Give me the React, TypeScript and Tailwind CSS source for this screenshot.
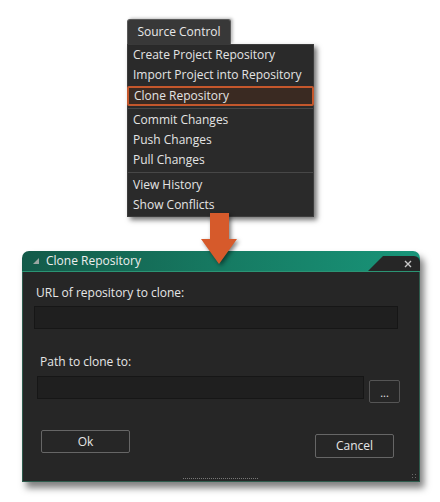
const menuTop = ["Create Project Repository", "Import Project into Repository"]
const menuMid = ["Commit Changes", "Push Changes", "Pull Changes"]
const menuEnd = ["View History", "Show Conflicts"]

function MenuItem({ label }: { label: string }) {
  return <div className="h-[20px] px-[5px] leading-[20px] text-[12px] text-[#e4e4e4]">{label}</div>
}

export default function App() {
  return (
    <div className="relative w-[440px] h-[502px] bg-white overflow-hidden font-['Open_Sans',sans-serif]">
      {/* menu */}
      <div className="pl-[127px] pt-[19px]">
        <div className="relative z-10 w-[104px] h-[25px] bg-[#383838] border border-[#5a5a5a] border-b-0 rounded-t-[3px] text-center leading-[24px] text-[12px] text-[#e8e8e8] shadow-[2px_-1px_3px_rgba(0,0,0,0.25)]">
          Source Control
        </div>
        <div className="w-[187px] bg-[#2a2a2a] border border-[#3c3c3c] pb-[1px] shadow-[3px_3px_5px_rgba(0,0,0,0.55)]">
          {menuTop.map((m) => (
            <MenuItem key={m} label={m} />
          ))}
          <div className="-mx-[1px] mt-[1px] h-[20px] px-[5px] leading-[16px] text-[12px] text-[#e4e4e4] bg-[#3a2a22] border-2 border-[#c4572c] rounded-[2px]">
            Clone Repository
          </div>
          <div className="h-[4px] flex items-center">
            <div className="w-full h-[1px] bg-[#474747]" />
          </div>
          {menuMid.map((m) => (
            <MenuItem key={m} label={m} />
          ))}
          <div className="h-[5px] flex items-center">
            <div className="w-full h-[1px] bg-[#474747]" />
          </div>
          {menuEnd.map((m) => (
            <MenuItem key={m} label={m} />
          ))}
        </div>
      </div>

      {/* dialog */}
      <div className="ml-[22px] mt-[34px] w-[398px] rounded-t-[7px] shadow-[4px_6px_7px_rgba(0,0,0,0.5)]">
        <div className="flex h-[21px] rounded-t-[7px] bg-gradient-to-r from-[#135a49] via-[#167a62] to-[#189579] border-b border-[#2b9474]">
          <div className="flex items-center pl-[11px] gap-[7px]">
            <svg width="6" height="6" viewBox="0 0 6 6">
              <polygon points="6,0 6,6 0,6" fill="#9aa6a2" />
            </svg>
            <span className="text-[12px] text-[#eeeeee] leading-none">Clone Repository</span>
          </div>
          <div className="ml-auto self-end w-[52px] h-[15px] bg-[#262626] rounded-tr-[6px] [clip-path:polygon(15px_0,100%_0,100%_100%,0_100%)] flex items-center justify-end pr-[8px]">
            <svg width="8" height="8" viewBox="0 0 8 8">
              <path d="M1 1L7 7M7 1L1 7" stroke="#c8c8c8" strokeWidth="1.4" />
            </svg>
          </div>
        </div>
        <div className="relative h-[210px] bg-[#262626] border border-t-0 border-[#2e5b4d] text-[12px] text-[#e6e6e6]">
          <div className="pl-[13px] pt-[13px] leading-[16px]">URL of repository to clone:</div>
          <div className="ml-[11px] mt-[5px] w-[364px] h-[23px] bg-[#1f1f1f] border border-[#161616]" />
          <div className="pl-[17px] mt-[25px] leading-[16px]">Path to clone to:</div>
          <div className="flex items-start mt-[6px] ml-[14px]">
            <div className="w-[327px] h-[23px] bg-[#1f1f1f] border border-[#161616]" />
            <div className="ml-[5px] mt-[4px] w-[31px] h-[23px] border border-[#555] rounded-[2px] flex items-end justify-center pb-[4px] text-[11px] leading-[10px]">
              ...
            </div>
          </div>
          <div className="flex items-start mt-[27px] pl-[18px] pr-[25px]">
            <button className="w-[89px] h-[23px] border border-[#666] rounded-[2px] bg-[#262626] text-[12px] text-[#e6e6e6]">
              Ok
            </button>
            <button className="ml-auto mt-[4px] w-[79px] h-[24px] border border-[#666] rounded-[2px] bg-[#262626] text-[12px] text-[#e6e6e6]">
              Cancel
            </button>
          </div>
          <div className="absolute bottom-[1px] left-[160px] w-[75px] h-[2px] border-t border-dotted border-[#777]" />
          <div className="absolute bottom-[2px] right-[2px] w-[6px] h-[6px] bg-[radial-gradient(#6a6a6a_1px,transparent_1px)] bg-[length:3px_3px]" />
        </div>
      </div>

      {/* arrow */}
      <svg className="absolute left-[199px] top-[213px] drop-shadow-[2px_2px_2px_rgba(0,0,0,0.5)]" width="40" height="54" viewBox="0 0 40 54">
        <polygon points="11,0 30,0 30,26 38,26 20,51 2,26 11,26" fill="#d65a2b" />
      </svg>
    </div>
  )
}
